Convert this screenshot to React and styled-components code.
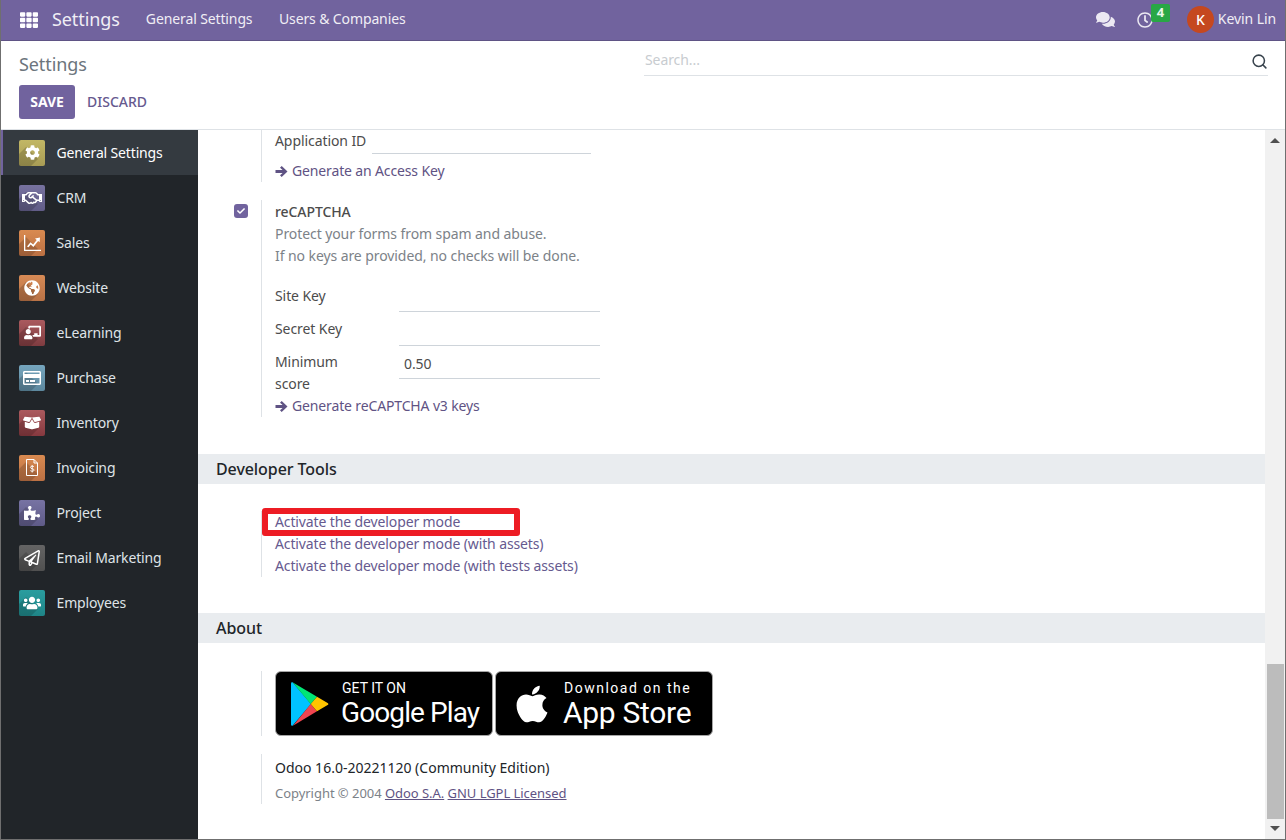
import React from "react";
import styled, { createGlobalStyle } from "styled-components";
import {
  FaTh, FaComments, FaRegClock, FaCheck, FaCog, FaRegHandshake,
  FaGlobeAmericas, FaChalkboardTeacher, FaRegCreditCard, FaBoxOpen, FaPuzzlePiece, FaRegPaperPlane,
  FaUsers, FaApple,
} from "react-icons/fa";
import { Search } from "lucide-react";

const Global = createGlobalStyle`
  html, body { margin: 0; padding: 0; height: 100%; overflow: hidden; }
  body { font-family: "Noto Sans", "Open Sans", sans-serif; font-size: 14px; line-height: 22px; color: #4c4c4c; background: #fff; letter-spacing: -0.08px; }
  * { box-sizing: border-box; }
`;

const Frame = styled.div`
  width: 1286px; height: 840px; display: flex; flex-direction: column; overflow: hidden;
  border-left: 1px solid #6f6f6f; border-right: 1px solid #6f6f6f; border-bottom: 1px solid #6f6f6f;
`;
const TopBar = styled.header`
  height: 41px; flex: none; display: flex; align-items: center; background: #71639e;
  border-bottom: 1px solid #5f5385; color: #fff; padding: 0 9px 3px 19px;
`;
const AppsIcon = styled.span`display: flex; font-size: 18px; margin-right: 14px; margin-top: 2px;`;
const BrandName = styled.span`font-size: 18px; color: #f0eef5; margin-right: 26px;`;
const NavLink = styled.span`font-size: 14px; color: #f0eef5; margin-right: 26.500px; letter-spacing: -0.12px;`;
const Spacer = styled.div`flex: 1;`;
const NavIcon = styled.span`display: flex; position: relative; color: #ece9f3; margin-right: ${p => p.$gap}px; font-size: ${p => p.$size}px; margin-top: 2px;`;
const Badge = styled.span`
  position: absolute; left: 14px; top: -8px; width: 19px; height: 18px; background: #28a745; border-radius: 2px;
  color: #e8f6ea; font-size: 13px; font-weight: 700; line-height: 17px; text-align: center;
`;
const Avatar = styled.span`
  width: 27px; height: 27px; border-radius: 50%; background: #c5481f; color: #fff; margin-right: 4px; margin-top: 2px;
  display: flex; align-items: center; justify-content: center; font-size: 14px; font-weight: 500;
`;
const UserName = styled.span`font-size: 14px; color: #f0eef5;`;

const ControlPanel = styled.section`
  height: 89px; flex: none; display: flex; justify-content: space-between; padding: 10px 17px 0 18px;
  border-bottom: 1px solid #dee2e6; background: #fff;
`;
const PanelLeft = styled.div`display: flex; flex-direction: column; align-items: flex-start;`;
const PageTitle = styled.div`font-size: 18px; line-height: 26px; color: #6c757d; margin-bottom: 8px;`;
const Buttons = styled.div`display: flex; align-items: center; gap: 12px;`;
const SaveButton = styled.button`
  width: 56px; height: 34px; border: 0; border-radius: 3px; background: #71639e; color: #fff; padding: 0 0 2px;
  font: 700 14px "Noto Sans", sans-serif; letter-spacing: -0.08px;
`;
const DiscardButton = styled.button`
  border: 0; background: none; padding: 0 0 2px; color: #665a8f; font: 500 14px "Noto Sans", sans-serif; height: 34px;
`;
const SearchBox = styled.div`
  width: 624px; height: 25px; margin-top: 0; display: flex; align-items: center; justify-content: space-between;
  border-bottom: 1px solid #dee2e6; color: #c8ccd0; font-size: 14px; padding-left: 1px; padding-bottom: 6px;
`;
const SearchGlyph = styled.span`display: flex; color: #38434d; margin-top: 3px;`;

const Body = styled.div`flex: 1; display: flex; min-height: 0;`;
const Sidebar = styled.nav`width: 197px; flex: none; background: #212529; display: flex; flex-direction: column; letter-spacing: -0.15px;`;
const SideItem = styled.div`
  height: 45px; display: flex; align-items: center; padding-left: ${p => (p.$active ? 16 : 18)}px; gap: 11.500px;
  background: ${p => (p.$active ? "#343a40" : "transparent")};
  border-left: ${p => (p.$active ? "2px solid #71639e" : "0")};
  color: ${p => (p.$active ? "#fff" : "#dfe3e7")};
`;
const AppTile = styled.span`
  position: relative; width: 26px; height: 26px; border-radius: 2px; overflow: hidden; flex: none;
  display: flex; align-items: center; justify-content: center; color: #fff; font-size: ${p => p.$size}px;
  background: linear-gradient(180deg, ${p => p.$from}, ${p => p.$to});
  svg.glyph { position: relative; }
`;
const TileShade = styled.svg`position: absolute; inset: 0; width: 26px; height: 26px;`;

const Main = styled.main`flex: 1; min-width: 0; display: flex; flex-direction: column; background: #fff; overflow: hidden;`;
const Block = styled.div`
  position: relative; margin-left: ${p => p.$left || 63}px; border-left: 1px solid #dee2e6; padding-left: 13px;
  margin-top: ${p => p.$top || 0}px;
  width: ${p => p.$width || 520}px;
`;
const Row = styled.div`display: flex; align-items: flex-start;`;
const FieldLabel = styled.span`color: #4c4c4c;`;
const InlineInput = styled.div`
  width: 219px; height: 24px; margin-left: 6px; border-bottom: 1px solid #ced4da; flex: none;
`;
const LinkLine = styled.a`
  display: flex; align-items: center; gap: 4px; color: #5f5384; height: 22px; margin-top: ${p => p.$top || 0}px; letter-spacing: -0.14px;
`;
const CheckSetting = styled.div`display: flex; margin-top: 18px; position: relative;`;
const CheckBox = styled.span`
  position: absolute; left: 36px; top: 4px; width: 14px; height: 14px; border-radius: 3px; background: #71639e;
  color: #fff; display: flex; align-items: center; justify-content: center; font-size: 8px;
`;
const SettingTitle = styled.div`font-weight: 500; color: #4c4c4c; margin-top: 1px;`;
const Muted = styled.div`color: #7c8288;`;
const FieldGrid = styled.div`
  display: grid; grid-template-columns: 124px 201px; grid-template-rows: 28px 28px auto; row-gap: 5px; margin-top: 18px;
`;
const FieldValue = styled.div`
  height: ${p => p.$h}px; border-bottom: 1px solid #ced4da; padding-left: 5px; line-height: 26px; color: #4c4c4c;
`;
const WrapLabel = styled.div`width: 80px;`;
const SectionHead = styled.h2`
  margin: ${p => p.$top}px 0 0; height: 30px; padding-left: 18px; background: #e9ecef; color: #212529;
  font-size: 16px; font-weight: 500; line-height: 31px; flex: none;
`;
const DevLink = styled.a`display: block; color: #665a8f; letter-spacing: -0.12px;`;
const Highlight = styled.span`
  position: absolute; left: 0; top: -3px; width: 258px; height: 28px; border: 6px solid #ed1c24; border-radius: 3px;
`;
const Stores = styled.div`display: flex; gap: 2px; height: 65px;`;
const StoreBadge = styled.div`
  width: 218px; height: 65px; background: #000; border: 1px solid #a6a6a6; border-radius: 6px; position: relative;
  display: flex; align-items: center; color: #fff; font-family: "Roboto", sans-serif; letter-spacing: 0;
`;
const StoreMark = styled.span`display: flex; flex: none; margin-left: ${p => p.$left}px; width: ${p => p.$w}px;`;
const StoreText = styled.div`display: flex; flex-direction: column; margin-left: ${p => p.$left}px; padding-top: 2px;`;
const StoreSmall = styled.span`font-size: ${p => p.$size}px; line-height: 15px; letter-spacing: ${p => p.$track}px; font-weight: 400; padding-left: 1px;`;
const StoreBig = styled.span`font-size: ${p => p.$size}px; line-height: 33px; font-weight: 400; letter-spacing: ${p => p.$track}px; white-space: nowrap;`;
const VersionLine = styled.div`color: #212529; padding-top: 3px; letter-spacing: 0;`;
const Copyright = styled.div`font-size: 13px; color: #7c8288; margin-top: 4px; line-height: 21px; letter-spacing: -0.04px; a { color: #5f5384; text-decoration: underline; }`;

const Scrollbar = styled.div`width: 20px; flex: none; background: #f1f1f1; display: flex; flex-direction: column; align-items: center; position: relative;`;
const ArrowUp = styled.span`margin-top: 8px; width: 0; height: 0; border: 5px solid transparent; border-top: 0; border-bottom: 5px solid #505050;`;
const Thumb = styled.div`width: 17px; height: 155px; background: #bcbcbc; margin-top: auto; margin-bottom: 7px; margin-left: 1px;`;
const ArrowDown = styled.span`margin-bottom: 8px; width: 0; height: 0; border: 5px solid transparent; border-bottom: 0; border-top: 5px solid #505050;`;

const shade = <TileShade viewBox="0 0 26 26"><polygon points="7,7 19,19 12,26 0,26 0,14" fill="#000" opacity="0.16" /></TileShade>;

function InvoiceGlyph() {
  return (
    <svg className="glyph" width="14" height="17" viewBox="0 0 14 17" fill="none" stroke="#fff" strokeWidth="1">
      <path d="M1.5 .5h7.5l3.5 3.5v12.5h-11z" />
      <path d="M9 .5v3.5h3.5" />
      <path d="M9 7.8c-.5-.8-3.6-1-3.6.6 0 1.8 3.7.9 3.7 2.7 0 1.5-3 1.4-3.8.5M7.2 6v7.5" strokeWidth=".9" />
    </svg>
  );
}

function ChartGlyph() {
  return (
    <svg className="glyph" width="17" height="16" viewBox="0 0 17 16" fill="#fff">
      <path d="M0 0h1.300v14.700H17V16H0z" />
      <path d="M3 11.500l3.500-4.300 2.700 2.200 3.500-4.500-1.700-1.500L16 2.500l-.4 4.700-1.500-1.300-4.700 6-2.700-2.300-2.200 2.700z" />
    </svg>
  );
}

function GooglePlayMark() {
  return (
    <svg width="38" height="44" viewBox="0 0 38 42" preserveAspectRatio="none">
      <path d="M0 1.5C0 .5 1 0 1.800.4L20 21 1.800 41.500C1 42 0 41.400 0 40.500z" fill="#00c3ff" />
      <path d="M1.500 .3 26 14l-6.300 7z" fill="#00e676" />
      <path d="M19.700 21 26 28 2 41.700z" fill="#ef4550" />
      <path d="M26 14l10.600 6c1 .6 1 1.500 0 2L26 28l-6.300-7z" fill="#ffc400" />
    </svg>
  );
}

function ArrowGlyph() {
  return (
    <svg width="13" height="13" viewBox="0 0 13 13" fill="#5f5384">
      <path d="M6.700 1 12.500 6.500 6.700 12 5 10.300 7.600 7.900H.5V5.100h7.100L5 2.700z" />
    </svg>
  );
}

const apps = [
  ["General Settings", "#c2b765", "#a89c55", FaCog, 15],
  ["CRM", "#77729f", "#615c87", FaRegHandshake, 20],
  ["Sales", "#d98a50", "#bb7043", ChartGlyph, 16],
  ["Website", "#d78a55", "#b87246", FaGlobeAmericas, 16],
  ["eLearning", "#aa5a5e", "#7f3c40", FaChalkboardTeacher, 17],
  ["Purchase", "#75a5bd", "#5d889e", FaRegCreditCard, 18],
  ["Inventory", "#ab5a5e", "#86393f", FaBoxOpen, 18],
  ["Invoicing", "#d98a50", "#bb7043", InvoiceGlyph, 14],
  ["Project", "#7773a3", "#5f5b88", FaPuzzlePiece, 16],
  ["Email Marketing", "#646464", "#505050", FaRegPaperPlane, 16],
  ["Employees", "#2a9d9f", "#1f8587", FaUsers, 18],
];

export default function App() {
  return (
    <Frame>
      <Global />
      <TopBar>
        <AppsIcon><FaTh /></AppsIcon>
        <BrandName>Settings</BrandName>
        <NavLink>General Settings</NavLink>
        <NavLink>Users &amp; Companies</NavLink>
        <Spacer />
        <NavIcon $size={19} $gap={22}><FaComments /></NavIcon>
        <NavIcon $size={16} $gap={34}><FaRegClock /><Badge>4</Badge></NavIcon>
        <Avatar>K</Avatar>
        <UserName>Kevin Lin</UserName>
      </TopBar>
      <ControlPanel>
        <PanelLeft>
          <PageTitle>Settings</PageTitle>
          <Buttons>
            <SaveButton>SAVE</SaveButton>
            <DiscardButton>DISCARD</DiscardButton>
          </Buttons>
        </PanelLeft>
        <SearchBox>
          <span>Search...</span>
          <SearchGlyph><Search size={17} strokeWidth={2.2} /></SearchGlyph>
        </SearchBox>
      </ControlPanel>
      <Body>
        <Sidebar>
          {apps.map(([name, from, to, Icon, size], i) => (
            <SideItem key={name} $active={i === 0}>
              <AppTile $from={from} $to={to} $size={size}>{shade}<Icon className="glyph" /></AppTile>
              {name}
            </SideItem>
          ))}
        </Sidebar>
        <Main>
          <Block>
            <Row>
              <FieldLabel>Application ID</FieldLabel>
              <InlineInput />
            </Row>
            <LinkLine $top={6}><ArrowGlyph />Generate an Access Key</LinkLine>
          </Block>
          <CheckSetting>
            <CheckBox><FaCheck /></CheckBox>
            <Block>
              <SettingTitle>reCAPTCHA</SettingTitle>
              <Muted>Protect your forms from spam and abuse.</Muted>
              <Muted>If no keys are provided, no checks will be done.</Muted>
              <FieldGrid>
                <FieldLabel>Site Key</FieldLabel>
                <FieldValue $h={27} />
                <FieldLabel>Secret Key</FieldLabel>
                <FieldValue $h={28} />
                <WrapLabel>Minimum score</WrapLabel>
                <FieldValue $h={28}>0.50</FieldValue>
              </FieldGrid>
              <LinkLine><ArrowGlyph />Generate reCAPTCHA v3 keys</LinkLine>
            </Block>
          </CheckSetting>
          <SectionHead $top={37}>Developer Tools</SectionHead>
          <Block $top={27}>
            <DevLink>Activate the developer mode</DevLink>
            <DevLink>Activate the developer mode (with assets)</DevLink>
            <DevLink>Activate the developer mode (with tests assets)</DevLink>
            <Highlight />
          </Block>
          <SectionHead $top={36}>About</SectionHead>
          <Block $top={28}>
            <Stores>
              <StoreBadge>
                <StoreMark $left={15} $w={38}><GooglePlayMark /></StoreMark>
                <StoreText $left={12}>
                  <StoreSmall $size={14} $track={0}>GET IT ON</StoreSmall>
                  <StoreBig $size={28} $track={-0.9}>Google Play</StoreBig>
                </StoreText>
              </StoreBadge>
              <StoreBadge>
                <StoreMark $left={15} $w={42}><FaApple size={42} /></StoreMark>
                <StoreText $left={10}>
                  <StoreSmall $size={14} $track={1.5}>Download on the</StoreSmall>
                  <StoreBig $size={30} $track={-0.3}>App Store</StoreBig>
                </StoreText>
              </StoreBadge>
            </Stores>
          </Block>
          <Block $top={18}>
            <VersionLine>Odoo 16.0-20221120 (Community Edition)</VersionLine>
            <Copyright>Copyright © 2004 <a>Odoo S.A.</a> <a>GNU LGPL Licensed</a></Copyright>
          </Block>
        </Main>
        <Scrollbar>
          <ArrowUp />
          <Thumb />
          <ArrowDown />
        </Scrollbar>
      </Body>
    </Frame>
  );
}
